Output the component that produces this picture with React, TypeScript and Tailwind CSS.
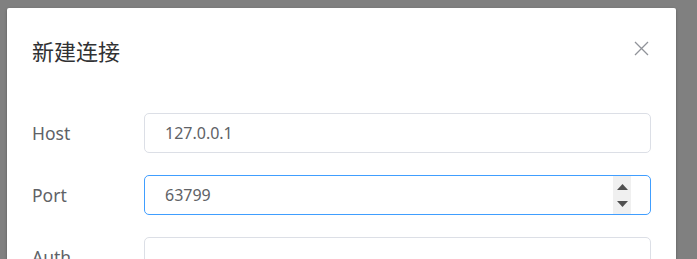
import { useState } from "react";

const font = { fontFamily: '"Noto Sans", "Noto Sans CJK SC", sans-serif' };

export default function App() {
  const [host, setHost] = useState("127.0.0.1");
  const [port, setPort] = useState("63799");
  const [auth, setAuth] = useState("");

  return (
    <main className="w-[697px] h-[259px] overflow-hidden bg-[#808080] pl-[7px] pt-[8px]" style={font}>
      <div className="w-[669px] h-[300px] bg-white rounded-[2px] shadow-[0_1px_3px_rgba(0,0,0,0.3)]">

        {/* header */}
        <div className="flex justify-between items-start pl-[25px] pr-[27px] pt-[28px]">
          <h1 className="text-[22px] leading-[30px] text-[#303133] font-normal">新建连接</h1>
          <button className="mt-[4px] w-[16px] h-[16px] flex items-center justify-center text-[#909399]">
            <svg width="15" height="15" viewBox="0 0 15 15" fill="none" stroke="currentColor" strokeWidth="1.3">
              <path d="M1 1 L14 14 M14 1 L1 14" />
            </svg>
          </button>
        </div>

        {/* form */}
        <div className="px-[25px] mt-[47px] flex flex-col gap-[22px]">

          <div className="flex items-center">
            <label className="w-[112px] text-[17.5px] leading-[40px] text-[#606266]">Host</label>
            <input
              className="flex-1 h-[40px] border border-[#dcdfe6] rounded-[5px] px-[20px] text-[16px] text-[#606266] outline-none"
              value={host}
              onChange={(e) => setHost(e.target.value)}
            />
          </div>

          <div className="flex items-center">
            <label className="w-[112px] text-[17.5px] leading-[40px] text-[#606266]">Port</label>
            <div className="flex-1 h-[40px] border border-[#409eff] rounded-[5px] pl-[20px] pr-[19px] flex items-stretch">
              <input
                className="flex-1 min-w-0 text-[16px] text-[#606266] outline-none bg-transparent"
                value={port}
                onChange={(e) => setPort(e.target.value)}
              />
              <div className="w-[18px] bg-[#f0f0f0] flex flex-col items-center justify-around py-[2px]">
                <svg width="11" height="6" viewBox="0 0 11 6"><path d="M5.5 0 L11 6 L0 6 Z" fill="#505050" /></svg>
                <svg width="11" height="6" viewBox="0 0 11 6"><path d="M0 0 L11 0 L5.5 6 Z" fill="#505050" /></svg>
              </div>
            </div>
          </div>

          <div className="flex items-center">
            <label className="w-[112px] text-[17.5px] leading-[40px] text-[#606266]">Auth</label>
            <input
              className="flex-1 h-[40px] border border-[#dcdfe6] rounded-[5px] px-[20px] text-[16px] text-[#606266] outline-none"
              value={auth}
              onChange={(e) => setAuth(e.target.value)}
            />
          </div>

        </div>
      </div>
    </main>
  );
}
